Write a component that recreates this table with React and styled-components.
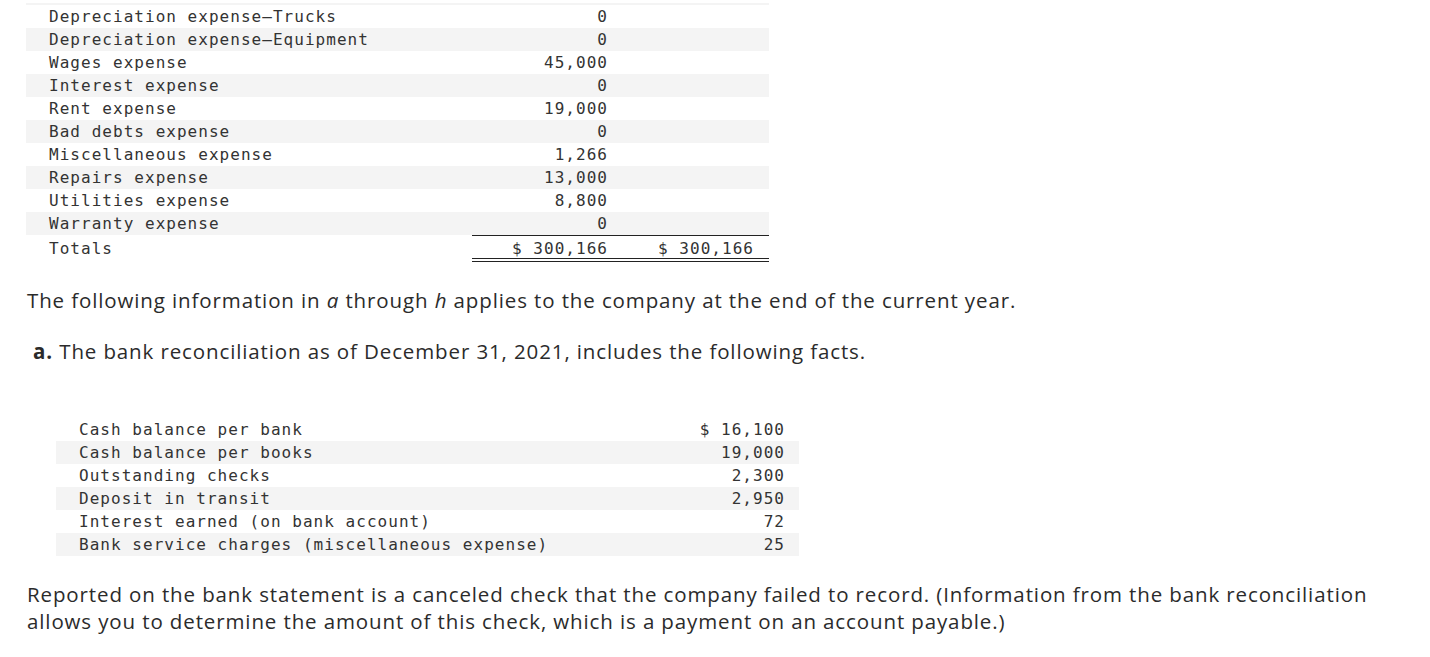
import React from 'react';
import styled, { createGlobalStyle } from 'styled-components';

const GlobalStyle = createGlobalStyle`
  body {
    margin: 0;
    background: #fff;
    color: #333;
  }
`;

const Page = styled.div`
  padding: 3px 0 0 26px;
`;

const TopStrip = styled.div`
  width: 743px;
  height: 2px;
  background: #f4f4f4;
`;

const Table = styled.div`
  display: grid;
  grid-template-columns: ${(p) => p.$cols};
  width: ${(p) => p.$width}px;
  margin: ${(p) => p.$margin || '0'};
  font-family: "DejaVu Sans Mono", "Liberation Mono", monospace;
  font-size: 16px;
  letter-spacing: 1.03px;
  color: #333;
`;

const Row = styled.div`
  display: contents;
  & > div {
    background: ${(p) => (p.$shade ? '#f4f4f4' : '#fff')};
  }
`;

const Cell = styled.div`
  height: 23px;
  line-height: 24px;
  white-space: nowrap;
  padding: ${(p) => (p.$num ? `0 ${p.$right || 15}px 0 0` : '0 0 0 23px')};
  text-align: ${(p) => (p.$num ? 'right' : 'left')};
`;

const TotalCell = styled(Cell)`
  height: 22px;
  line-height: 26px;
  border-top: ${(p) => (p.$num ? '1px solid #222' : '1px solid transparent')};
  border-bottom: ${(p) => (p.$num ? '4px double #222' : '4px double transparent')};
`;

const Para = styled.p`
  margin: ${(p) => p.$margin};
  padding-left: ${(p) => p.$indent || 1}px;
  font-family: "Open Sans", Lato, sans-serif;
  font-size: 20.5px;
  letter-spacing: 0.88px;
  line-height: 27px;
  color: #2b2b2b;
  max-width: 1360px;
`;

const expenses = [
  ['Depreciation expense\u2014Trucks', '0'],
  ['Depreciation expense\u2014Equipment', '0'],
  ['Wages expense', '45,000'],
  ['Interest expense', '0'],
  ['Rent expense', '19,000'],
  ['Bad debts expense', '0'],
  ['Miscellaneous expense', '1,266'],
  ['Repairs expense', '13,000'],
  ['Utilities expense', '8,800'],
  ['Warranty expense', '0'],
];

const facts = [
  ['Cash balance per bank', '$ 16,100'],
  ['Cash balance per books', '19,000'],
  ['Outstanding checks', '2,300'],
  ['Deposit in transit', '2,950'],
  ['Interest earned (on bank account)', '72'],
  ['Bank service charges (miscellaneous expense)', '25'],
];

const App = () => {
  return (
    <>
      <GlobalStyle />
      <Page>
        <TopStrip />
        <Table $cols="1fr 151px 146px" $width={743}>
          {expenses.map(([label, amount], i) => (
            <Row key={label} $shade={i % 2 === 1}>
              <Cell>{label}</Cell>
              <Cell $num>{amount}</Cell>
              <Cell $num></Cell>
            </Row>
          ))}
          <Row>
            <TotalCell>Totals</TotalCell>
            <TotalCell $num>$ 300,166</TotalCell>
            <TotalCell $num>$ 300,166</TotalCell>
          </Row>
        </Table>

        <Para $margin="25px 0 0 0">
          The following information in <em>a</em> through <em>h</em> applies to the company at the end of the current year.
        </Para>
        <Para $margin="24px 0 0 0" $indent={7}>
          <b>a.</b> The bank reconciliation as of December 31, 2021, includes the following facts.
        </Para>

        <Table $cols="1fr 200px" $width={743} $margin="53px 0 0 30px">
          {facts.map(([label, amount], i) => (
            <Row key={label} $shade={i % 2 === 1}>
              <Cell>{label}</Cell>
              <Cell $num $right={14}>{amount}</Cell>
            </Row>
          ))}
        </Table>

        <Para $margin="25px 0 0 0">
          Reported on the bank statement is a canceled check that the company failed to record. (Information from the bank reconciliation allows you to determine the amount of this check, which is a payment on an account payable.)
        </Para>
      </Page>
    </>
  );
};

export default App;
